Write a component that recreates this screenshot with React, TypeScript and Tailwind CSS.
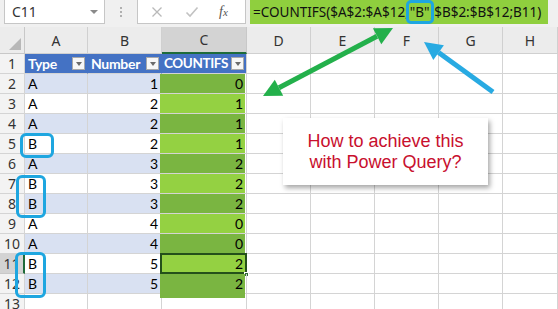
import React from "react";

type Row = { n: number; type: string; num: string; cnt: string };

const rows: Row[] = [
	{ n: 2, type: "A", num: "1", cnt: "0" },
	{ n: 3, type: "A", num: "2", cnt: "1" },
	{ n: 4, type: "A", num: "2", cnt: "1" },
	{ n: 5, type: "B", num: "2", cnt: "1" },
	{ n: 6, type: "A", num: "3", cnt: "2" },
	{ n: 7, type: "B", num: "3", cnt: "2" },
	{ n: 8, type: "B", num: "3", cnt: "2" },
	{ n: 9, type: "A", num: "4", cnt: "0" },
	{ n: 10, type: "A", num: "4", cnt: "0" },
	{ n: 11, type: "B", num: "5", cnt: "2" },
	{ n: 12, type: "B", num: "5", cnt: "2" },
];

const colLetters = ["A", "B", "C", "D", "E", "F", "G", "H"];

const cell = "border-r border-b border-[#d4d4d4] flex items-center";

const DropBtn = () => (
	<span className="ml-auto mr-[2px] w-[13px] h-[13px] shrink-0 bg-[#f7f7f7] border border-[#a9a9a9] flex items-center justify-center">
		<span className="w-0 h-0 border-l-[3px] border-r-[3px] border-t-[4px] border-l-transparent border-r-transparent border-t-[#6b6b6b]" />
	</span>
);

const Blank = () => (
	<>
		{[0, 1, 2, 3, 4].map((i) => (
			<div key={i} className={cell} />
		))}
	</>
);

const FormulaBar = () => (
	<div className="h-[27px] bg-[#f0f0f0] flex items-start font-['Noto_Sans',sans-serif]">
		<div className="ml-[4px] w-[101px] h-[24px] bg-white border border-t-0 border-[#c6c6c6] flex items-center pl-[7px] pr-[6px] text-[14px] text-[#333]">
			<span>C11</span>
			<span className="ml-auto w-0 h-0 border-l-[4px] border-r-[4px] border-t-[4px] border-l-transparent border-r-transparent border-t-[#8a8a8a]" />
		</div>
		<div className="w-[32px] h-[24px] flex flex-col items-center justify-center gap-[2px]">
			<span className="w-[2px] h-[2px] bg-[#b0b0b0]" />
			<span className="w-[2px] h-[2px] bg-[#b0b0b0]" />
			<span className="w-[2px] h-[2px] bg-[#b0b0b0]" />
		</div>
		<div className="w-[109px] h-[24px] bg-white border border-t-0 border-[#c6c6c6] flex items-center text-[#b5b5b5]">
			<svg width="12" height="12" viewBox="0 0 12 12" className="ml-[13px]">
				<path d="M1.5 1.5 L10.5 10.5 M10.5 1.5 L1.5 10.5" stroke="#b9b9b9" strokeWidth="1.3" fill="none" />
			</svg>
			<svg width="14" height="12" viewBox="0 0 14 12" className="ml-[22px]">
				<path d="M1.5 6.5 L5 10 L12.5 1.5" stroke="#c2c2c2" strokeWidth="1.6" fill="none" />
			</svg>
			<span className="ml-[20px] italic text-[14px] text-[#555] font-['Liberation_Serif',serif]">
				f<span className="text-[11px]">x</span>
			</span>
		</div>
		<div className="ml-[4px] w-[298px] h-[24px] bg-[#8fcf3e] flex items-center pl-[3px] text-[13.5px] text-[#111] whitespace-nowrap">
			=COUNTIFS($A$2:$A$12;
			<span className="relative px-[1px]">
				"B"
				<span className="absolute left-[-3px] right-[-3px] top-[-2px] bottom-[-2px] border-[3px] border-[#1ea6e0] rounded-[5px]" />
			</span>
			;$B$2:$B$12;B11)
		</div>
	</div>
);

const Sheet = () => (
	<div className="grid grid-cols-[25px_63px_74px_85px_64px_64px_64px_64px_55px] grid-rows-[27px_repeat(13,20px)] text-[14px] font-['Lato',sans-serif] text-black">
		{/* column headers */}
		<div className="border-r border-b border-[#c8c8c8] bg-[#ececec] relative">
			<svg width="12" height="12" viewBox="0 0 12 12" className="absolute right-[3px] bottom-[3px]">
				<polygon points="12,0 12,12 0,12" fill="#b8b8b8" />
			</svg>
		</div>
		{colLetters.map((c) => (
			<div
				key={c}
				className={
					c === "C"
						? "border-r border-b-2 border-r-[#c8c8c8] border-b-[#1f6b3a] bg-[#d3d3d3] flex items-center justify-center text-[#333] font-['Noto_Sans',sans-serif]"
						: "border-r border-b border-[#d0d0d0] bg-[#ececec] flex items-center justify-center text-[#333] font-['Noto_Sans',sans-serif]"
				}
			>
				{c}
			</div>
		))}

		{/* row 1 */}
		<div className="border-r border-b border-[#d4d4d4] bg-[#f3f3f3] flex items-center justify-center text-[#333] font-['Noto_Sans',sans-serif]">1</div>
		<div className="border-b border-r border-[#d4d4d4] border-r-[#4472c4] bg-[#4472c4] text-white font-bold flex items-center pl-[3px] tracking-[-0.3px]">
			Type
			<DropBtn />
		</div>
		<div className="border-b border-r border-[#d4d4d4] border-r-[#4472c4] bg-[#4472c4] text-white font-bold flex items-center pl-[3px] tracking-[-0.3px]">
			Number
			<DropBtn />
		</div>
		<div className="border-b border-r border-[#d4d4d4] bg-[#4472c4] text-white font-bold flex items-center pl-[2px] text-[13.5px] tracking-[-0.4px]">
			COUNTIFS
			<DropBtn />
		</div>
		<Blank />

		{rows.map((r) => {
			const stripe = r.n % 2 === 0 ? "bg-[#d9e1f2]" : "bg-white";
			const green = r.n % 2 === 0 ? "bg-[#7ab541]" : "bg-[#94d142]";
			const sel = r.n === 11;
			return (
				<React.Fragment key={r.n}>
					<div
						className={
							sel
								? "border-b border-r-2 border-b-[#c8c8c8] border-r-[#1f6b3a] bg-[#d3d3d3] flex items-center justify-center text-[#333] font-['Noto_Sans',sans-serif]"
								: "border-r border-b border-[#d4d4d4] bg-[#f3f3f3] flex items-center justify-center text-[#333] font-['Noto_Sans',sans-serif]"
						}
					>
						{r.n}
					</div>
					<div className={`${cell} ${stripe} pl-[3px]`}>{r.type}</div>
					<div className={`${cell} ${stripe} justify-end pr-[3px]`}>{r.num}</div>
					<div className="border-r border-b border-[#d4d4d4] relative">
						<div className={`absolute left-[-2px] right-[1px] top-0 bottom-0 ${green} flex items-center justify-end pr-[2px]`}>
							{r.cnt}
						</div>
						{r.n === 12 && (
							<div className="absolute left-[-2px] right-[1px] top-[19px] h-[5px] bg-[#7ab541]" />
						)}
						{sel && (
							<>
								<div className="absolute left-[-2px] right-[-1px] top-[-1px] bottom-[-1px] border-2 border-[#24501a]" />
								<div className="absolute right-[-3px] bottom-[-4px] w-[5px] h-[5px] bg-[#2f6a38] border border-white" />
							</>
						)}
					</div>
					<Blank />
				</React.Fragment>
			);
		})}

		{/* row 13 */}
		<div className="border-r border-b border-[#d4d4d4] bg-[#f3f3f3] flex items-center justify-center text-[#333] font-['Noto_Sans',sans-serif]">13</div>
		<div className={cell} />
		<div className={cell} />
		<div className={cell} />
		<Blank />
	</div>
);

const Annotations = () => (
	<>
		{/* cyan highlight boxes */}
		<div className="absolute left-[20px] top-[133px] w-[34px] h-[25px] border-[3px] border-[#1ea6e0] rounded-[6px]" />
		<div className="absolute left-[16px] top-[175px] w-[30px] h-[43px] border-[3px] border-[#1ea6e0] rounded-[6px]" />
		<div className="absolute left-[15px] top-[252px] w-[31px] h-[46px] border-[3px] border-[#1ea6e0] rounded-[6px]" />

		{/* arrows */}
		<svg width="558" height="309" className="absolute left-0 top-0 pointer-events-none">
			<line x1="279" y1="87.7" x2="377" y2="36.3" stroke="#23b04b" strokeWidth="5" />
			<polygon points="263,96 283.2,95.7 274.8,79.7" fill="#23b04b" />
			<polygon points="393,28 381.3,44.3 372.9,28.3" fill="#23b04b" />
			<line x1="493" y1="92" x2="438.6" y2="52.6" stroke="#28aae2" strokeWidth="5" />
			<polygon points="424,42 443.9,45.3 433.3,59.9" fill="#28aae2" />
		</svg>

		{/* callout */}
		<div className="absolute left-[283px] top-[118px] w-[205px] h-[67px] bg-white shadow-[2px_3px_5px_rgba(0,0,0,0.35)] flex flex-col items-center justify-center text-[18px] leading-[21px] text-[#c8102e] font-['Liberation_Sans',sans-serif]">
			<span>How to achieve this</span>
			<span>with Power Query?</span>
		</div>
	</>
);

export default function App() {
	return (
		<div className="relative w-[558px] h-[309px] overflow-hidden bg-white">
			<FormulaBar />
			<Sheet />
			<Annotations />
		</div>
	);
}
